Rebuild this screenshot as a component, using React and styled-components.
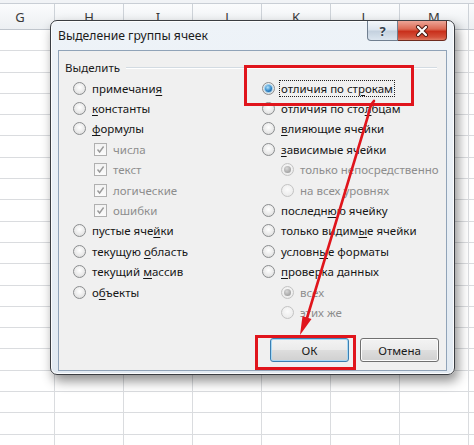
import React from 'react';
import styled, { createGlobalStyle } from 'styled-components';

const Global = createGlobalStyle`
  html, body { margin: 0; padding: 0; }
  body {
    width: 474px; height: 445px; overflow: hidden; background: #fff;
    font-family: "Noto Sans", "Liberation Sans", sans-serif;
  }
`;

const Page = styled.div`
  position: relative;
  width: 474px;
  height: 445px;
  overflow: hidden;
  background: #fff;
`;

/* ---------- spreadsheet background ---------- */
const Sheet = styled.div`
  display: flex;
  flex-direction: column;
`;
const TopStrip = styled.div`
  height: 3px;
  background: #f1f3f6;
  border-bottom: 1px solid #c9ced5;
`;
const HeaderRow = styled.div`
  display: flex;
  height: 26px;
  box-sizing: border-box;
  margin-left: -14px;
  background: linear-gradient(#fbfcfd, #eceff2);
  border-bottom: 1px solid #bfc5cc;
`;
const HeaderCell = styled.div`
  flex: 0 0 69px;
  box-sizing: border-box;
  display: flex;
  align-items: center;
  justify-content: center;
  border-right: 1px solid #cdd2d8;
  font-size: 13px;
  color: #3a3a3a;
`;
const GridRow = styled.div`
  display: flex;
  height: 21.3px;
  box-sizing: border-box;
  margin-left: -14px;
  border-bottom: 1px solid #dadcdf;
`;
const GridCell = styled.div`
  flex: 0 0 69px;
  box-sizing: border-box;
  border-right: 1px solid #dadcdf;
`;

/* ---------- dialog window ---------- */
const Dialog = styled.div`
  position: absolute;
  left: 50px;
  top: 20px;
  width: 405px;
  height: 355px;
  box-sizing: border-box;
  border: 1px solid #3a3d42;
  border-radius: 7px;
  background: linear-gradient(#eef3f8, #e2eaf2);
  box-shadow: 3px 6px 12px rgba(0, 0, 0, 0.45), inset 0 0 0 1px rgba(255, 255, 255, 0.85);
  display: flex;
  flex-direction: column;
  padding: 0 7px 3px 7px;
`;
const TitleBar = styled.div`
  display: flex;
  height: 29px;
  flex: none;
`;
const TitleText = styled.div`
  align-self: center;
  font-size: 12.2px;
  color: #1b1b1b;
`;
const CaptionButtons = styled.div`
  margin-left: auto;
  display: flex;
  align-self: flex-start;
`;
const HelpButton = styled.div`
  width: 31px;
  height: 20px;
  box-sizing: border-box;
  border: 1px solid #707f90;
  border-top: none;
  border-radius: 0 0 0 4px;
  background: linear-gradient(#f3f6f9, #dbe4ee 48%, #c3d0de 52%, #dbe5ef);
  display: flex;
  align-items: center;
  justify-content: center;
  font-size: 13px;
  font-weight: bold;
  color: #34404c;
  text-shadow: 0 0 2px #fff;
`;
const CloseButton = styled.div`
  width: 49px;
  height: 20px;
  box-sizing: border-box;
  border: 1px solid #6e2b20;
  border-left: none;
  border-top: none;
  border-radius: 0 0 4px 0;
  background: linear-gradient(#eca597, #dc6a55 42%, #c9301c 55%, #d4503a 85%, #e07a62);
  display: flex;
  align-items: center;
  justify-content: center;
`;

const Client = styled.div`
  flex: 1;
  box-sizing: border-box;
  border: 1px solid #90a3b8;
  background: #f0f0f0;
  display: flex;
  flex-direction: column;
  padding: 8px 7px 8px 6px;
`;
const Legend = styled.div`
  display: flex;
  align-items: center;
  height: 17px;
  font-size: 11.5px;
  color: #1b1b1b;
`;
const LegendLine = styled.div`
  flex: 1;
  height: 1px;
  margin: 0 2px 0 6px;
  background: #d3dbe2;
  box-shadow: 0 1px 0 #fff;
`;
const Columns = styled.div`
  display: grid;
  grid-template-columns: 189px 1fr;
  margin: 2px 0 0 8px;
`;
const Column = styled.div`
  display: flex;
  flex-direction: column;
`;
const Item = styled.div`
  display: flex;
  align-items: center;
  height: 20.4px;
  padding-left: ${p => p.$indent || 0}px;
  gap: 5px;
  font-size: 11.5px;
  color: ${p => (p.$disabled ? '#8d8d8d' : '#161616')};
  white-space: nowrap;
`;
const Label = styled.span`
  padding: 0 1px;
  outline: ${p => (p.$focus ? '1px dotted #222' : 'none')};
  outline-offset: 0px;
  u { text-decoration-thickness: 1px; text-underline-offset: 2px; }
`;
const RadioMark = styled.span`
  flex: none;
  width: 13px;
  height: 13px;
  box-sizing: border-box;
  border-radius: 50%;
  border: 1px solid ${p => (p.$disabled ? '#c3c3c3' : '#8b8d8f')};
  background: ${p =>
    p.$disabled
      ? 'radial-gradient(circle at 50% 40%, #fbfbfb, #ececec 70%, #e0e0e0)'
      : 'radial-gradient(circle at 50% 40%, #ffffff, #e6e6e6 65%, #cdcdcd)'};
  display: flex;
  align-items: center;
  justify-content: center;
  &::after {
    content: '';
    display: ${p => (p.$checked ? 'block' : 'none')};
    width: 7px;
    height: 7px;
    border-radius: 50%;
    background: ${p =>
      p.$disabled
        ? 'radial-gradient(circle at 40% 35%, #d8d8d8, #8e8e8e)'
        : 'radial-gradient(circle at 40% 35%, #b6e4fb, #2f86c9 55%, #0c3f7a)'};
    box-shadow: ${p => (p.$disabled ? 'none' : '0 0 0 1px #9bd0ef')};
  }
`;
const CheckMark = styled.span`
  flex: none;
  width: 13px;
  height: 13px;
  box-sizing: border-box;
  border: 1px solid #b0b0b0;
  background: linear-gradient(#f2f2f2, #fbfbfb);
  display: flex;
  align-items: center;
  justify-content: center;
`;
const ButtonRow = styled.div`
  margin-top: auto;
  display: flex;
  justify-content: flex-end;
  gap: 11px;
`;
const Button = styled.div`
  width: 79px;
  height: 24px;
  box-sizing: border-box;
  border-radius: 3px;
  border: 1px solid ${p => (p.$focus ? '#3c7fb1' : '#707070')};
  background: linear-gradient(#f3f3f3, #ebebeb 48%, #dddddd 52%, #d0d0d0);
  box-shadow: ${p => (p.$focus ? 'inset 0 0 0 1px #a6d8f5' : 'inset 0 0 0 1px #fcfcfc')};
  display: flex;
  align-items: center;
  justify-content: center;
  font-size: 11.5px;
  color: #1a1a1a;
`;

/* ---------- red annotations ---------- */
const Highlight = styled.div`
  position: absolute;
  box-sizing: border-box;
  border: 3px solid #e0151c;
  pointer-events: none;
`;
const ArrowLayer = styled.svg`
  position: absolute;
  left: 0;
  top: 0;
  pointer-events: none;
`;

const Radio = ({ checked, disabled, indent, focus, children }) => (
  <Item $indent={indent} $disabled={disabled}>
    <RadioMark $checked={checked} $disabled={disabled} />
    <Label $focus={focus}>{children}</Label>
  </Item>
);

const Check = ({ indent, children }) => (
  <Item $indent={indent} $disabled>
    <CheckMark>
      <svg width="9" height="9" viewBox="0 0 9 9">
        <path d="M1.5 4.5 L3.6 7 L7.6 1.5" fill="none" stroke="#9a9a9a" strokeWidth="1.4" />
      </svg>
    </CheckMark>
    <Label>{children}</Label>
  </Item>
);

const columns = ['G', 'H', 'I', 'J', 'K', 'L', 'M'];

export default function App() {
  return (
    <Page>
      <Global />
      <Sheet>
        <TopStrip />
        <HeaderRow>
          {columns.map(c => (
            <HeaderCell key={c}>{c}</HeaderCell>
          ))}
        </HeaderRow>
        {Array.from({ length: 20 }).map((_, r) => (
          <GridRow key={r}>
            {columns.map(c => (
              <GridCell key={c} />
            ))}
          </GridRow>
        ))}
      </Sheet>

      <Dialog>
        <TitleBar>
          <TitleText>Выделение группы ячеек</TitleText>
          <CaptionButtons>
            <HelpButton>?</HelpButton>
            <CloseButton>
              <svg width="14" height="12" viewBox="0 0 14 12">
                <path d="M3 2 L11 10 M11 2 L3 10" stroke="#4a1a12" strokeWidth="4" strokeLinecap="round" />
                <path d="M3 2 L11 10 M11 2 L3 10" stroke="#fff" strokeWidth="2.2" strokeLinecap="round" />
              </svg>
            </CloseButton>
          </CaptionButtons>
        </TitleBar>
        <Client>
          <Legend>
            Выделить
            <LegendLine />
          </Legend>
          <Columns>
            <Column>
              <Radio>примечани<u>я</u></Radio>
              <Radio><u>к</u>онстанты</Radio>
              <Radio><u>ф</u>ормулы</Radio>
              <Check indent={21}>числа</Check>
              <Check indent={21}>текст</Check>
              <Check indent={21}>логические</Check>
              <Check indent={21}>ошибки</Check>
              <Radio>пустые яче<u>й</u>ки</Radio>
              <Radio>текущую <u>о</u>бласть</Radio>
              <Radio>текущий <u>м</u>ассив</Radio>
              <Radio>о<u>б</u>ъекты</Radio>
            </Column>
            <Column>
              <Radio checked focus>отличия по ст<u>р</u>окам</Radio>
              <Radio>отличия по сто<u>л</u>бцам</Radio>
              <Radio><u>в</u>лияющие ячейки</Radio>
              <Radio><u>з</u>ависимые ячейки</Radio>
              <Radio indent={19} disabled checked>только непосредственно</Radio>
              <Radio indent={19} disabled>на всех уровнях</Radio>
              <Radio>последн<u>ю</u>ю ячейку</Radio>
              <Radio>только видим<u>ы</u>е ячейки</Radio>
              <Radio>условн<u>ы</u>е форматы</Radio>
              <Radio><u>п</u>роверка данных</Radio>
              <Radio indent={19} disabled checked>всех</Radio>
              <Radio indent={19} disabled>этих же</Radio>
            </Column>
          </Columns>
          <ButtonRow>
            <Button $focus>ОК</Button>
            <Button>Отмена</Button>
          </ButtonRow>
        </Client>
      </Dialog>

      <Highlight style={{ left: 244, top: 65, width: 170, height: 41 }} />
      <Highlight style={{ left: 255, top: 335, width: 101, height: 35 }} />
      <ArrowLayer width="474" height="445" viewBox="0 0 474 445">
        <path d="M374 101 C371 104 369 110 368 116 L307 318" fill="none" stroke="#e0151c" strokeWidth="2.6" strokeLinecap="round" />
        <path d="M300 335 L302.5 316 L311.5 319 Z" fill="#e0151c" />
      </ArrowLayer>
    </Page>
  );
}
